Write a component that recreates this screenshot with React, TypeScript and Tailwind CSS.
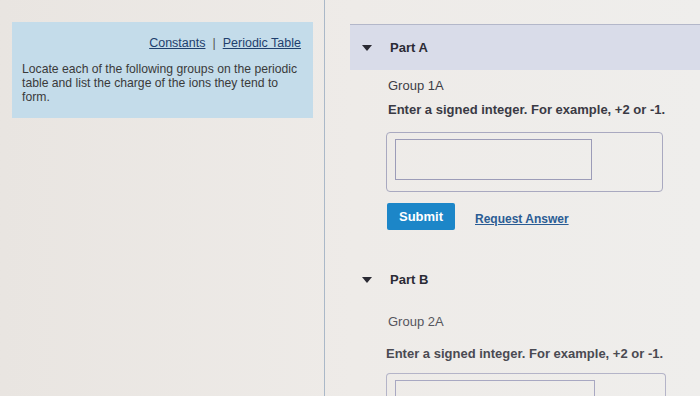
const FONT = { fontFamily: '"Liberation Sans", Arial, sans-serif' }

function Caret() {
  return (
    <svg width="10" height="6" viewBox="0 0 10 6" className="shrink-0">
      <path d="M0 0 L10 0 L5 6 Z" fill="#2a2a33" />
    </svg>
  )
}

function AnswerBox({ cut }: { cut?: boolean }) {
  return (
    <div
      className={
        cut
          ? 'ml-[36px] h-[40px] w-[280px] rounded-t-[4px] border-x-[1.5px] border-t-[1.5px] border-[#b4b4c8] px-[8px] pt-[6px]'
          : 'ml-[36px] h-[60px] w-[277px] rounded-[4px] border-[1.5px] border-[#a9a9c0] px-[8px] py-[6px]'
      }
    >
      <div
        className={
          cut
            ? 'h-full w-[200px] border-x border-t border-[#a8a8c2]'
            : 'h-[41px] w-[197px] border border-[#9c9cb8]'
        }
      />
    </div>
  )
}

export default function App() {
  return (
    <div
      className="flex h-[396px] w-[700px] overflow-hidden bg-gradient-to-r from-[#e9e5e1] via-[#eeebe8] to-[#efeeec] text-[#333]"
      style={FONT}
    >
      <aside className="w-[325px] shrink-0 border-r-[1.5px] border-[#aab8c8] pt-[22px] pl-[12px]">
        <div className="h-[96px] w-[301px] bg-[#c4dcea] pt-[12px] pr-[12px] pl-[10px]">
          <p className="text-right text-[12.5px] text-[#1f3f6e]">
            <span className="underline">Constants</span>
            <span className="mx-[7px] text-[#555]">|</span>
            <span className="underline">Periodic Table</span>
          </p>
          <p className="mt-[9px] w-[280px] text-[12.2px] leading-[14px] text-[#3a3a3a]">
            Locate each of the following groups on the periodic table and list the charge of the ions
            they tend to form.
          </p>
        </div>
      </aside>

      <main className="flex-1 pt-[24px] pl-[25px]">
        <section>
          <div className="flex h-[46px] items-center gap-[18px] border-t border-[#b3b7c9] bg-[#d9dce9] pl-[12px]">
            <Caret />
            <span className="text-[13px] font-bold text-[#2b2b35]">Part A</span>
          </div>
          <p className="mt-[8px] ml-[38px] text-[13px] leading-[16px] text-[#3d3d45]">Group 1A</p>
          <p className="mt-[8px] ml-[38px] text-[13px] leading-[16px] font-bold text-[#3a3a44]">
            Enter a signed integer. For example, +2 or -1.
          </p>
          <div className="mt-[14px]">
            <AnswerBox />
          </div>
          <div className="mt-[11px] ml-[37px] flex items-center gap-[20px]">
            <button
              type="button"
              className="h-[27px] w-[68px] rounded-[2px] bg-[#1c86c8] text-[13px] font-bold text-white"
            >
              Submit
            </button>
            <a className="mt-[4px] text-[12px] font-bold text-[#2b5c94] underline">Request Answer</a>
          </div>
        </section>

        <section className="mt-[27px]">
          <div className="flex h-[46px] items-center gap-[18px] pl-[12px]">
            <Caret />
            <span className="text-[13px] font-bold text-[#2b2b35]">Part B</span>
          </div>
          <p className="mt-[11px] ml-[38px] text-[13px] leading-[16px] text-[#55555d]">Group 2A</p>
          <p className="mt-[16px] ml-[36px] text-[13px] leading-[16px] font-bold text-[#4a4a52]">
            Enter a signed integer. For example, +2 or -1.
          </p>
          <div className="mt-[11px]">
            <AnswerBox cut />
          </div>
        </section>
      </main>
    </div>
  )
}
